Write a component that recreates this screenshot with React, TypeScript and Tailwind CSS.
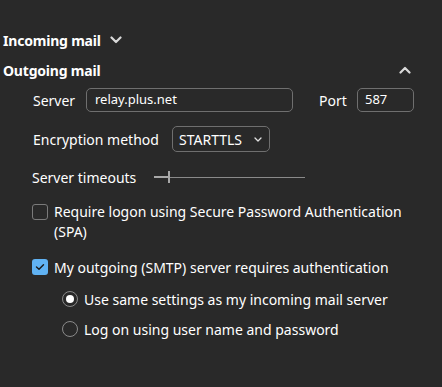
import React from "react";

const font = { fontFamily: '"Segoe UI", "Noto Sans", "Open Sans", sans-serif' };

function ChevronDown() {
  return (
    <svg width="12" height="8" viewBox="0 0 12 8" className="ml-[9px]">
      <path d="M1.5 1.5 L6 6 L10.5 1.5" fill="none" stroke="#d9d9d9" strokeWidth="2.2" strokeLinecap="round" strokeLinejoin="round" />
    </svg>
  );
}

function ChevronUp() {
  return (
    <svg width="12" height="8" viewBox="0 0 12 8">
      <path d="M1.5 6.5 L6 2 L10.5 6.5" fill="none" stroke="#d9d9d9" strokeWidth="2.2" strokeLinecap="round" strokeLinejoin="round" />
    </svg>
  );
}

export default function App() {
  return (
    <div className="w-[442px] h-[387px] bg-[#292929] text-white overflow-hidden pt-[25px] text-[14px]" style={font}>
      <div className="h-[30px] flex items-center pl-[3px]">
        <span className="font-bold text-[14px] tracking-[-0.2px]">Incoming mail</span>
        <ChevronDown />
      </div>
      <div className="h-[30px] flex items-center pl-[3px] pr-[31px] justify-between">
        <span className="font-bold text-[14px] tracking-[-0.2px]">Outgoing mail</span>
        <ChevronUp />
      </div>

      <div className="pl-[33px]">
        <div className="mt-[3px] h-[24px] flex items-center">
          <span className="w-[53px]">Server</span>
          <div className="w-[207px] h-[24px] border border-[#6f6f6f] rounded-[5px] flex items-center pl-[8px] text-[13px]">relay.plus.net</div>
          <span className="ml-[26px] w-[38px]">Port</span>
          <div className="w-[57px] h-[24px] border border-[#6f6f6f] rounded-[5px] flex items-center pl-[7px] text-[13px]">587</div>
        </div>

        <div className="mt-[14px] h-[26px] flex items-center">
          <span className="w-[139px]">Encryption method</span>
          <div className="w-[98px] h-[26px] border border-[#6f6f6f] rounded-[5px] flex items-center pl-[6px] pr-[7px] justify-between">
            <span>STARTTLS</span>
            <svg width="8" height="5" viewBox="0 0 8 5">
              <path d="M1 1 L4 4 L7 1" fill="none" stroke="#e0e0e0" strokeWidth="1.3" strokeLinecap="round" strokeLinejoin="round" />
            </svg>
          </div>
        </div>

        <div className="mt-[13px] h-[24px] flex items-center -ml-[1px]">
          <span className="w-[122px]">Server timeouts</span>
          <div className="relative w-[151px] h-[14px] flex items-center">
            <div className="w-[14px] h-[2px] bg-[#a8a8a8]" />
            <div className="w-[2px] h-[12px] bg-[#a8a8a8]" />
            <div className="flex-1 h-[1px] bg-[#8a8a8a]" />
          </div>
        </div>

        <div className="mt-[13px] flex items-start -ml-[1px]">
          <div className="mt-[2px] w-[16px] h-[16px] border border-[#7a7a7a] rounded-[3px] shrink-0" />
          <span className="ml-[6px] leading-[20px] w-[360px]">Require logon using Secure Password Authentication (SPA)</span>
        </div>

        <div className="mt-[15px] h-[20px] flex items-center -ml-[1px]">
          <div className="w-[16px] h-[16px] rounded-[3px] bg-[#60b2f3] flex items-center justify-center shrink-0">
            <svg width="10" height="8" viewBox="0 0 10 8">
              <path d="M1.5 4 L4 6.3 L8.5 1.7" fill="none" stroke="#1a1a1a" strokeWidth="1.4" strokeLinecap="round" strokeLinejoin="round" />
            </svg>
          </div>
          <span className="ml-[6px]">My outgoing (SMTP) server requires authentication</span>
        </div>

        <div className="pl-[29px]">
          <div className="mt-[12px] h-[20px] flex items-center">
            <div className="w-[16px] h-[16px] rounded-full border border-[#8a8a8a] flex items-center justify-center shrink-0">
              <div className="w-[8px] h-[8px] rounded-full bg-white" />
            </div>
            <span className="ml-[6px]">Use same settings as my incoming mail server</span>
          </div>
          <div className="mt-[10px] h-[20px] flex items-center">
            <div className="w-[16px] h-[16px] rounded-full border border-[#8a8a8a] shrink-0" />
            <span className="ml-[6px]">Log on using user name and password</span>
          </div>
        </div>
      </div>
    </div>
  );
}
